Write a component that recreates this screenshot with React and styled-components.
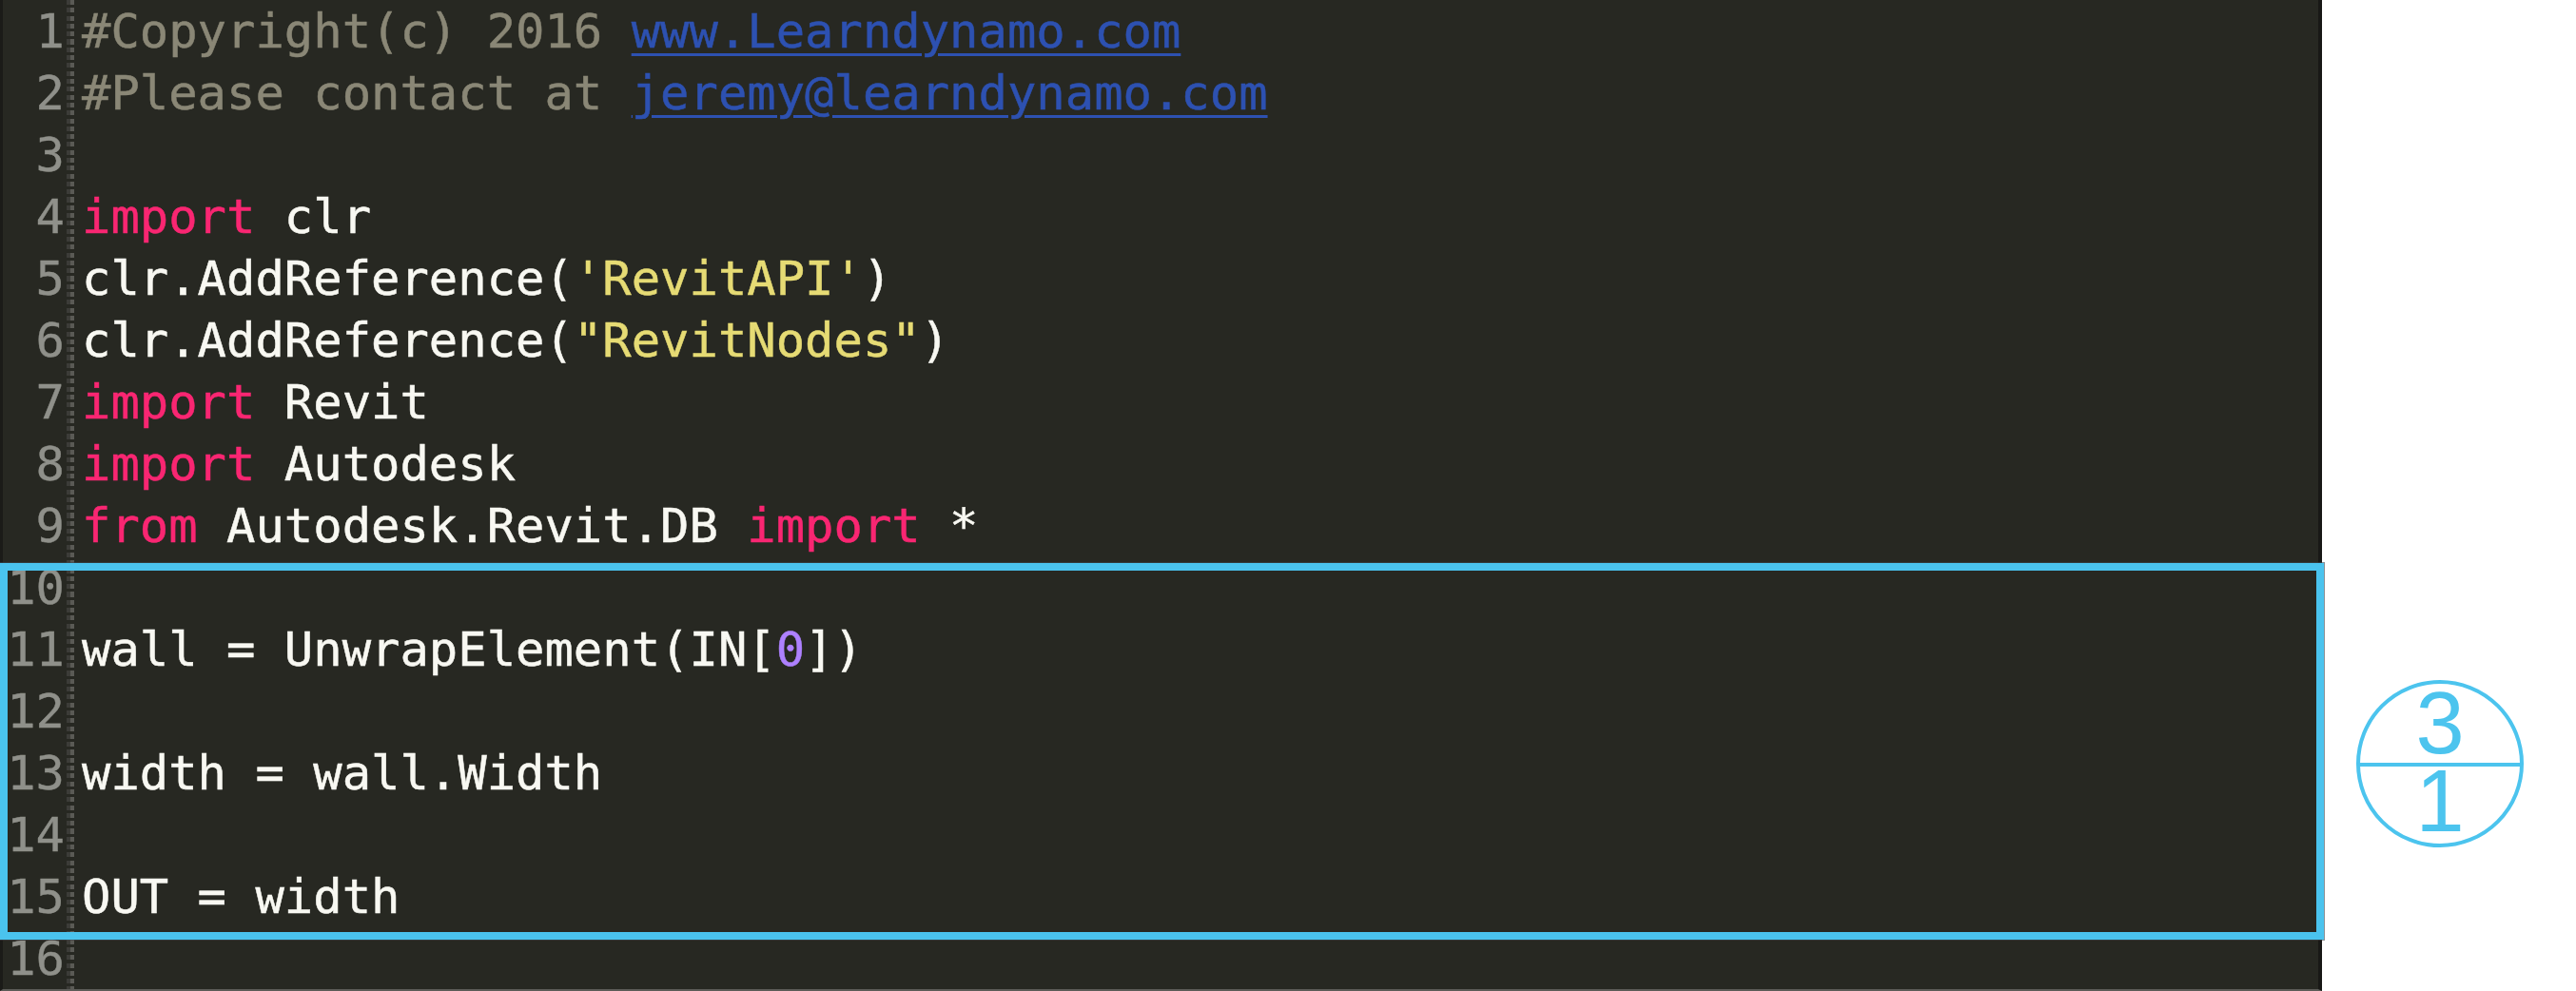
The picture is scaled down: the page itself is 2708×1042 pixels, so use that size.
import React from 'react';
import styled, { createGlobalStyle } from 'styled-components';

const GlobalStyle = createGlobalStyle`
  html, body {
    margin: 0;
    padding: 0;
    background: #ffffff;
  }
`

const Page = styled.div`
  position: relative;
  display: flex;
  width: 2708px;
  height: 1042px;
  background: #ffffff;
  overflow: hidden;
`

const Editor = styled.div`
  display: flex;
  width: 2441px;
  height: 1042px;
  box-sizing: border-box;
  background: #272822;
  border-left: 3px solid #1b1b18;
  border-right: 4px solid #181816;
  border-bottom: 2px solid #5c5c58;
  font-family: 'DejaVu Sans Mono', 'Liberation Mono', monospace;
  font-size: 50.5px;
  line-height: 65px;
`

const Gutter = styled.div`
  width: 65px;
  margin-right: 2px;
  text-align: right;
  color: #8f908a;
  -webkit-text-stroke: 0.4px #8f908a;
`

const Dots = styled.div`
  width: 8px;
  background:
    repeating-linear-gradient(to bottom, #3c3c38 0 5px, transparent 5px 8.3px) left top / 4px 100% no-repeat,
    repeating-linear-gradient(to bottom, #5a5a55 0 5px, transparent 5px 8.3px) right top / 4px 100% no-repeat;
`

const Code = styled.div`
  flex: 1;
  padding-left: 8px;
  color: #f8f8f2;
`

const Row = styled.div`
  height: 65px;
  white-space: pre;
`

const colors = {
  text: '#f8f8f2',
  comment: '#8a8776',
  keyword: '#f92672',
  string: '#e6db74',
  number: '#ae81ff',
  link: '#2d51b1',
}

const Token = styled.span`
  color: ${p => colors[p.$kind]};
  -webkit-text-stroke: 0.5px ${p => colors[p.$kind]};
  ${p => p.$kind === 'link' && `
    text-decoration: underline;
    text-decoration-thickness: 3px;
    text-underline-offset: 6px;
  `}
`

const Highlight = styled.div`
  position: absolute;
  left: 0;
  top: 592px;
  width: 2443px;
  height: 396px;
  box-sizing: border-box;
  border: 8px solid #4ac3ee;
  box-shadow: 0 0 0 1px rgba(60, 70, 78, 0.6);
  pointer-events: none;
`

const Side = styled.div`
  flex: 1;
  padding-top: 715px;
  padding-left: 36px;
`

const Badge = styled.div`
  width: 176px;
  height: 176px;
  box-sizing: border-box;
  border: 4px solid #4cc4ee;
  border-radius: 50%;
  display: flex;
  flex-direction: column;
  font-family: 'Liberation Sans', Arial, sans-serif;
  font-size: 92px;
  color: #4cc4ee;
  text-align: center;
`

const Half = styled.div`
  height: ${p => p.$h}px;
  line-height: ${p => p.$lh}px;
  ${p => p.$top && 'border-bottom: 4px solid #4cc4ee;'}
`

const lines = [
  [['comment', '#Copyright(c) 2016 '], ['link', 'www.Learndynamo.com']],
  [['comment', '#Please contact at '], ['link', 'jeremy@learndynamo.com']],
  [],
  [['keyword', 'import'], ['text', ' clr']],
  [['text', 'clr.AddReference('], ['string', "'RevitAPI'"], ['text', ')']],
  [['text', 'clr.AddReference('], ['string', '"RevitNodes"'], ['text', ')']],
  [['keyword', 'import'], ['text', ' Revit']],
  [['keyword', 'import'], ['text', ' Autodesk']],
  [['keyword', 'from'], ['text', ' Autodesk.Revit.DB '], ['keyword', 'import'], ['text', ' *']],
  [],
  [['text', 'wall = UnwrapElement(IN['], ['number', '0'], ['text', '])']],
  [],
  [['text', 'width = wall.Width']],
  [],
  [['text', 'OUT = width']],
  [],
]

export default function App() {
  return (
    <Page>
      <GlobalStyle />
      <Editor>
        <Gutter>
          {lines.map((_, i) => <Row key={i}>{i + 1}</Row>)}
        </Gutter>
        <Dots />
        <Code>
          {lines.map((line, i) => (
            <Row key={i}>
              {line.map(([kind, text], j) => <Token key={j} $kind={kind}>{text}</Token>)}
            </Row>
          ))}
        </Code>
      </Editor>
      <Highlight />
      <Side>
        <Badge>
          <Half $top $h={83} $lh={83}>3</Half>
          <Half $h={81} $lh={73}>1</Half>
        </Badge>
      </Side>
    </Page>
  )
}
